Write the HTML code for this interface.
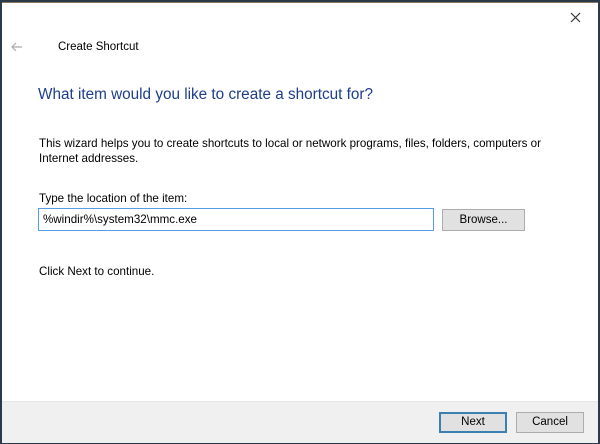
<!DOCTYPE html><html><head><style>
body{margin:0;width:600px;height:444px;background:#2a3a4a;overflow:hidden;font-family:"Liberation Sans",sans-serif;}
.win{position:absolute;left:2px;top:2px;width:596px;height:439px;background:#fff;border-top:1px solid #8a7560;}
.t{position:absolute;color:#000;font-size:11.6px;white-space:nowrap}
.foot{position:absolute;left:0;top:398px;width:596px;height:41px;background:#f0f0f0;border-top:1px solid #e6e6e6}
.btn{position:absolute;height:20px;background:#e1e1e1;border:1px solid #adadad;font-size:11.5px;text-align:center;line-height:20px;box-sizing:border-box}
</style></head><body>
<div class="win">
<svg style="position:absolute;left:568px;top:9px" width="11" height="11"><path d="M1 1L10 10M10 1L1 10" stroke="#333" stroke-width="1.2"/></svg>
<svg style="position:absolute;left:9px;top:39px" width="12" height="10"><path d="M1 5H11M5 1L1 5L5 9" stroke="#aaa" stroke-width="1.2" fill="none"/></svg>
<div class="t" style="left:56px;top:38px;font-size:11.5px">Create Shortcut</div>
<div class="t" style="left:36px;top:83px;font-size:15.3px;color:#1e3d8a">What item would you like to create a shortcut for?</div>
<div class="t" style="left:37px;top:133px;line-height:15px">This wizard helps you to create shortcuts to local or network programs, files, folders, computers or<br>Internet addresses.</div>
<div class="t" style="left:37px;top:189px">Type the location of the item:</div>
<div style="position:absolute;left:36px;top:205px;width:396px;height:23px;border:1px solid #569de5;box-sizing:border-box"></div>
<div class="t" style="left:41px;top:210px">%windir%\system32\mmc.exe</div>
<div class="btn" style="left:440px;top:206px;width:83px;height:22px;line-height:20px">Browse...</div>
<div class="t" style="left:37px;top:262px">Click Next to continue.</div>
<div class="foot">
<div class="btn" style="left:437px;top:10px;width:68px;height:21px;border:2px solid #3c7fb1;line-height:17px">Next</div>
<div class="btn" style="left:514px;top:10px;width:68px;height:21px;line-height:19px">Cancel</div>
</div>
</div>
</body></html>
